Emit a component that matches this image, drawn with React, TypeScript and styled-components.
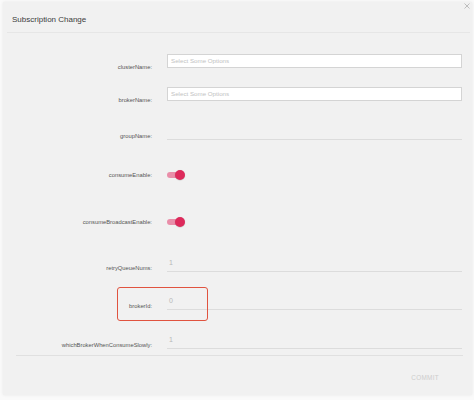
import styled, { createGlobalStyle } from "styled-components";

const GlobalStyle = createGlobalStyle`
    html, body {
        margin: 0;
        padding: 0;
        background: #fafafa;
        font-family: "Liberation Sans", Arial, sans-serif;
    }
`

const Page = styled.div`
    padding: 2px 2px 5px 3px;
`

const Dialog = styled.div`
    width: 469px;
    height: 393px;
    background: #f1f1f1;
    box-shadow: 0 0 3px rgba(0, 0, 0, 0.08);
    display: flex;
    flex-direction: column;
`

const Header = styled.div`
    height: 30px;
    margin: 0 2px 0 4px;
    padding-left: 5px;
    border-bottom: 1px solid #e6e6e6;
    display: flex;
    justify-content: space-between;
    align-items: flex-start;
`

const Title = styled.div`
    padding-top: 12px;
    font-size: 8px;
    line-height: 12px;
    color: #3c3c3c;
`

const Close = styled.svg`
    margin: 1px 0 0 0;
    width: 6px;
    height: 6px;
`

const Form = styled.div`
    display: flex;
    flex-direction: column;
`

const Row = styled.div<{ $gap: number }>`
    position: relative;
    margin-top: ${p => p.$gap}px;
    padding-right: 10px;
    display: flex;
    align-items: flex-end;
    gap: 15px;
`

const Label = styled.div<{ $pad?: number }>`
    width: 149px;
    flex-shrink: 0;
    text-align: right;
    font-size: 5.8px;
    line-height: 8px;
    color: #555;
    padding-bottom: ${p => p.$pad ?? 0}px;
`

const BoxInput = styled.div`
    flex: 1;
    height: 12px;
    margin-bottom: 3px;
    background: #fff;
    border: 1px solid #d4d4d4;
    padding-left: 3px;
    font-size: 6.2px;
    line-height: 12px;
    color: #c2c2c2;
`

const TextField = styled.div`
    flex: 1;
    height: 15px;
    border-bottom: 1px solid #dcdcdc;
    padding-left: 2px;
    font-size: 7px;
    line-height: 14px;
    color: #b8b8b8;
`

const Toggle = styled.div`
    width: 18px;
    height: 14px;
    display: flex;
    align-items: center;
`

const Track = styled.div`
    width: 14px;
    height: 6px;
    border-radius: 3px;
    background: #e98ea9;
    display: flex;
    align-items: center;
    justify-content: flex-end;
`

const Thumb = styled.div`
    width: 10px;
    height: 10px;
    margin-right: -4px;
    flex-shrink: 0;
    border-radius: 50%;
    background: #dd2a5b;
    box-shadow: 0 0.5px 1px rgba(0, 0, 0, 0.2);
`

const Highlight = styled.div`
    position: absolute;
    left: 114px;
    top: -7px;
    width: 89px;
    height: 32px;
    border: 1.5px solid #e0533f;
    border-radius: 3px;
    pointer-events: none;
`

const Divider = styled.div`
    margin: 6px 9px 0 13px;
    border-top: 1px solid #e0e0e0;
`

const Footer = styled.div`
    display: flex;
    justify-content: flex-end;
    padding: 17px 33px 0 0;
`

const Commit = styled.div`
    font-size: 6.4px;
    line-height: 10px;
    letter-spacing: 0.3px;
    color: #cdcdcd;
`

function Switch() {
    return (
        <Toggle>
            <Track>
                <Thumb />
            </Track>
        </Toggle>
    )
}

export default function App() {
    return (
        <>
            <GlobalStyle />
            <Page>
                <Dialog>
                    <Header>
                        <Title>Subscription Change</Title>
                        <Close viewBox="0 0 6 6">
                            <path d="M0.5 0.5 L5.5 5.5 M5.5 0.5 L0.5 5.5" stroke="#b0b0b0" strokeWidth="0.8" />
                        </Close>
                    </Header>
                    <Form>
                        <Row $gap={21}>
                            <Label>clusterName:</Label>
                            <BoxInput>Select Some Options</BoxInput>
                        </Row>
                        <Row $gap={16}>
                            <Label>brokerName:</Label>
                            <BoxInput>Select Some Options</BoxInput>
                        </Row>
                        <Row $gap={20}>
                            <Label>groupName:</Label>
                            <TextField />
                        </Row>
                        <Row $gap={28}>
                            <Label $pad={3}>consumeEnable:</Label>
                            <Switch />
                        </Row>
                        <Row $gap={33}>
                            <Label $pad={3}>consumeBroadcastEnable:</Label>
                            <Switch />
                        </Row>
                        <Row $gap={27}>
                            <Label>retryQueueNums:</Label>
                            <TextField>1</TextField>
                        </Row>
                        <Row $gap={22}>
                            <Label>brokerId:</Label>
                            <TextField>0</TextField>
                            <Highlight />
                        </Row>
                        <Row $gap={23}>
                            <Label>whichBrokerWhenConsumeSlowly:</Label>
                            <TextField>1</TextField>
                        </Row>
                    </Form>
                    <Divider />
                    <Footer>
                        <Commit>COMMIT</Commit>
                    </Footer>
                </Dialog>
            </Page>
        </>
    )
}
